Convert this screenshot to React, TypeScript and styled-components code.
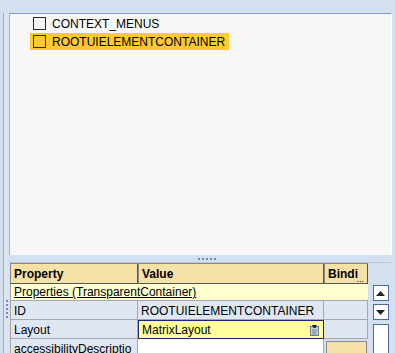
import React from 'react';
import styled, { createGlobalStyle } from 'styled-components';

const GlobalStyle = createGlobalStyle`
    html, body {
        margin: 0;
        padding: 0;
        background: #d3e0ef;
    }
    body {
        font-family: "Liberation Sans", Arial, sans-serif;
        font-size: 12px;
        color: #000;
    }
`;

const Screen = styled.div`
    width: 395px;
    height: 353px;
    display: flex;
    overflow: hidden;
    background: #d3e0ef;
`;
const LeftStrip = styled.div`
    width: 9px;
    flex-shrink: 0;
    display: flex;
    flex-direction: column;
    padding-top: 13px;
    box-sizing: border-box;
`;
const StripLine = styled.div`
    flex: 1;
    margin-left: 3px;
    border-left: 1px solid #9eacbf;
    background: #dbe4ef;
    display: flex;
    flex-direction: column;
    align-items: flex-end;
    padding-top: 287px;
    padding-right: 1px;
    gap: 2px;
`;
const Dot = styled.span`
    width: 2px;
    height: 2px;
    background: #6c8cbc;
`;
const Main = styled.div`
    width: 382px;
    display: flex;
    flex-direction: column;
`;
const TopBar = styled.div`
    height: 13px;
    flex-shrink: 0;
`;
const TreePanel = styled.div`
    height: 242px;
    flex-shrink: 0;
    box-sizing: border-box;
    background: #f7f7f7;
    border-top: 1px solid #7d9cc9;
    border-left: 1px solid #a8b8cc;
    padding: 1px 0 0 20px;
    display: flex;
    flex-direction: column;
    align-items: flex-start;
    gap: 1px;
`;
const TreeItem = styled.div<{ $selected?: boolean }>`
    height: 17px;
    display: flex;
    align-items: center;
    gap: 6px;
    padding: 0 4px 0 3px;
    background: ${p => (p.$selected ? '#ffc933' : 'transparent')};
`;
const Check = styled.span`
    width: 11px;
    height: 11px;
    border: 1px solid #2c2c2c;
    background: transparent;
`;
const Splitter = styled.div`
    height: 8px;
    flex-shrink: 0;
    display: flex;
    justify-content: center;
    align-items: flex-start;
    gap: 2px;
    padding: 3px 0 0 14px;
    box-sizing: border-box;
    border-bottom: 1px solid #b8c6d8;
`;
const Bottom = styled.div`
    flex: 1;
    display: flex;
    gap: 2px;
    padding-left: 1px;
`;
const Table = styled.div`
    width: 358px;
    display: grid;
    grid-template-columns: 128px 186px 44px;
    grid-auto-rows: 19px;
    align-content: start;
`;
const HeadCell = styled.div`
    height: 21px;
    box-sizing: border-box;
    background: #f6e2a6;
    border: 1px solid #8a8a8a;
    border-right-color: #555;
    border-bottom-color: #555;
    font-weight: bold;
    padding: 3px 0 0 3px;
    white-space: nowrap;
    overflow: hidden;
    position: relative;
`;
const Ellipsis = styled.span`
    position: absolute;
    right: 3px;
    bottom: 1px;
    font-weight: normal;
    font-size: 9px;
    line-height: 6px;
`;
const GroupRow = styled.div`
    grid-column: 1 / 4;
    box-sizing: border-box;
    background: #ffffcf;
    border-bottom: 1px solid #a7a7a7;
    border-left: 1px solid #a7a7a7;
    padding: 3px 0 0 3px;
    text-decoration: underline;
`;
const Cell = styled.div<{ $bg?: string }>`
    box-sizing: border-box;
    background: ${p => p.$bg || '#dfe7f3'};
    border-right: 1px solid #a7a7a7;
    border-bottom: 1px solid #a7a7a7;
    padding: 3px 0 0 3px;
    white-space: nowrap;
    overflow: hidden;
`;
const FirstCell = styled(Cell)`
    border-left: 1px solid #a7a7a7;
`;
const InputCell = styled.div`
    box-sizing: border-box;
    background: #ffff9e;
    border: 1px solid #1b2a6b;
    padding: 1px 0 0 3px;
    display: flex;
    justify-content: space-between;
    align-items: center;
`;
const ValueHelp = styled.svg`
    margin-right: 4px;
`;
const BindButton = styled.div`
    margin: 2px 1px 0 2px;
    background: #f6e2a6;
    border: 1px solid #8a8a8a;
    height: 24px;
`;
const ScrollCol = styled.div`
    width: 22px;
    display: flex;
    flex-direction: column;
    align-items: center;
    padding-top: 22px;
    gap: 3px;
`;
const ScrollBtn = styled.div`
    width: 16px;
    height: 16px;
    box-sizing: border-box;
    border: 1px solid #4a6a9a;
    background: #fff;
    display: flex;
    align-items: center;
    justify-content: center;
`;
const Track = styled.div`
    width: 16px;
    flex: 1;
    box-sizing: border-box;
    border: 1px solid #4a6a9a;
    border-bottom: none;
    background: #fff;
    margin-top: 1px;
`;
const RightEdge = styled.div`
    width: 4px;
    flex-shrink: 0;
    padding-top: 14px;
    box-sizing: border-box;
`;
const RightLine = styled.div`
    width: 1px;
    height: 241px;
    background: #fff;
`;

const Arrow = ({ up }: { up?: boolean }) => (
    <svg width="9" height="5" viewBox="0 0 9 5">
        <path d={up ? 'M0 5 L4.5 0 L9 5 Z' : 'M0 0 L9 0 L4.5 5 Z'} fill="#222" />
    </svg>
);

export default function App() {
    return (
        <Screen>
            <GlobalStyle />
            <LeftStrip>
                <StripLine>
                    {[0, 1, 2, 3, 4].map(i => <Dot key={i} />)}
                </StripLine>
            </LeftStrip>
            <Main>
                <TopBar />
                <TreePanel>
                    <TreeItem><Check />CONTEXT_MENUS</TreeItem>
                    <TreeItem $selected><Check />ROOTUIELEMENTCONTAINER</TreeItem>
                </TreePanel>
                <Splitter>
                    {[0, 1, 2, 3, 4].map(i => <Dot key={i} />)}
                </Splitter>
                <Bottom>
                    <Table>
                        <HeadCell>Property</HeadCell>
                        <HeadCell>Value</HeadCell>
                        <HeadCell>Bindi<Ellipsis>...</Ellipsis></HeadCell>
                        <GroupRow>Properties (TransparentContainer)</GroupRow>
                        <FirstCell>ID</FirstCell>
                        <Cell>ROOTUIELEMENTCONTAINER</Cell>
                        <Cell />
                        <FirstCell>Layout</FirstCell>
                        <InputCell>
                            MatrixLayout
                            <ValueHelp width="9" height="11" viewBox="0 0 9 11">
                                <rect x="0.5" y="1.5" width="8" height="9" fill="#c9d2de" stroke="#6b7a8e" />
                                <path d="M2 0 H7 L5.5 3 H3.5 Z" fill="#222" />
                                <path d="M2 5 H7 M2 7 H7 M2 9 H6" stroke="#6b7a8e" />
                            </ValueHelp>
                        </InputCell>
                        <Cell />
                        <FirstCell>accessibilityDescriptio</FirstCell>
                        <Cell $bg="#fff" />
                        <BindButton />
                    </Table>
                    <ScrollCol>
                        <ScrollBtn><Arrow up /></ScrollBtn>
                        <ScrollBtn><Arrow /></ScrollBtn>
                        <Track />
                    </ScrollCol>
                </Bottom>
            </Main>
            <RightEdge><RightLine /></RightEdge>
        </Screen>
    );
}
